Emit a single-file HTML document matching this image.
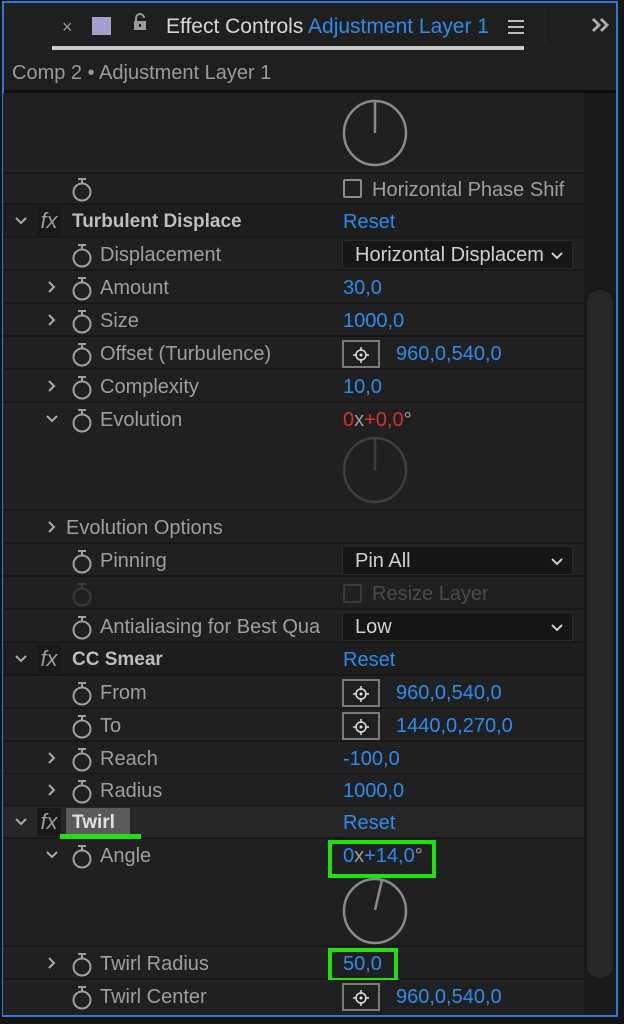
<!DOCTYPE html>
<html><head><meta charset="utf-8"><style>
*{margin:0;padding:0;box-sizing:border-box}
body{width:624px;height:1024px;background:#141414;font-family:"Liberation Sans",sans-serif;position:relative;overflow:hidden}
.frame{position:absolute;left:2px;top:1px;width:616px;height:1016px;border:2px solid #2f78d8;background:#1f1f1f}
.a{position:absolute}
.row{position:absolute;left:3px;width:581px;height:33px;border-bottom:2px solid #171717;background:#202020}
.hdr{background:#1d1d1d}
.lbl{position:absolute;left:97px;top:6px;font-size:20px;color:#9e9e9e;white-space:nowrap}
.hl{left:69px;font-weight:bold;color:#bdbdbd;font-size:19px}
.val{position:absolute;left:340px;top:6px;font-size:20px;color:#2d8ceb;white-space:nowrap}
.chev{position:absolute;left:42px;top:9px}
.hchev{left:11px}
.sw{position:absolute;left:67px;top:5px}
.fx{position:absolute;left:34px;top:2px;width:24px;height:28px;background:#191919;color:#9a9a9a;font-family:"Liberation Sans",sans-serif;font-style:italic;font-size:22px;text-align:center;line-height:28px}
.dd{position:absolute;left:339px;top:2px;width:231px;height:29px;background:#161616;border:1px solid #2a2a2a;color:#d0d0d0;font-size:20px;white-space:nowrap}
.dd span{position:absolute;left:12px;top:3px;width:190px;overflow:hidden}
.dd svg{position:absolute;right:8px;top:10px}
.tgt{position:absolute;left:339px;top:3px;width:38px;height:28px;border:2px solid #7a7a7a}
.tgt svg{position:absolute;left:9px;top:5px}
.val2{left:393px}
</style></head><body>
<div class="frame"></div>
<div class="a" style="left:62px;top:17px;color:#9a9a9a;font-size:18px">×</div>
<div class="a" style="left:92px;top:17px;width:19px;height:18px;background:#a19fcc"></div>
<svg class="a" style="left:132px;top:13px" width="16" height="18"><path d="M4 8V5a4 4 0 0 1 8 0" fill="none" stroke="#9a9a9a" stroke-width="2"/><rect x="2" y="8" width="12" height="9" fill="#9a9a9a"/><rect x="7" y="11" width="2" height="3" fill="#1f1f1f"/></svg>
<div class="a" style="left:166px;top:15px;font-size:21px;color:#d6d6d6;white-space:nowrap">Effect Controls <span style="color:#2d8ceb">Adjustment Layer 1</span></div>
<svg class="a" style="left:508px;top:20px" width="16" height="14"><path d="M0 1h16M0 7h16M0 13h16" stroke="#bbb" stroke-width="2"/></svg>
<div class="a" style="left:52px;top:46px;width:472px;height:4px;background:#c8c8c8"></div>
<div class="a" style="left:545px;top:10px;width:1px;height:35px;background:#2a2a2a"></div>
<svg class="a" style="left:591px;top:17px" width="20" height="16"><path d="M2 2l6 6-6 6M10 2l6 6-6 6" fill="none" stroke="#aaa" stroke-width="3"/></svg>
<div class="a" style="left:12px;top:62px;font-size:20px;color:#9a9a9a;white-space:nowrap">Comp 2 • Adjustment Layer 1</div>
<div class="a" style="left:4px;top:90px;width:612px;height:3px;background:#0e0e0e"></div>
<div class="a" style="left:584px;top:93px;width:32px;height:922px;background:#191919"></div>
<div class="a" style="left:587px;top:290px;width:26px;height:688px;background:#272727;border-radius:12px"></div>
<div class="row" style="top:93px;height:81px"><svg class="a" style="left:339px;top:6px" width="66" height="68"><ellipse cx="33" cy="34" rx="31" ry="32" fill="none" stroke="#8a8a8a" stroke-width="2.5"/><path d="M33 3v31" stroke="#8a8a8a" stroke-width="2.5"/></svg></div>
<div class="row" style="top:174px;height:31px"><svg class="sw" style="top:3px" width="26" height="26"><path d="M8 2h8M12 2v4" stroke="#a0a0a0" stroke-width="2"/><circle cx="12" cy="15" r="8.5" fill="none" stroke="#a0a0a0" stroke-width="2"/></svg><div class="a" style="left:340px;top:5px;width:19px;height:19px;border:2px solid #8a8a8a;border-radius:2px"></div><div class="lbl" style="left:369px;top:5px">Horizontal Phase Shif</div></div>

<div class="row hdr" style="top:205px"><svg class="chev hchev" width="14" height="14"><path d="M2 4l5 5 5-5" fill="none" stroke="#aaa" stroke-width="2"/></svg><div class="fx">fx</div><div class="lbl hl">Turbulent Displace</div><div class="val">Reset</div></div>
<div class="row" style="top:238px"><svg class="sw" width="26" height="26"><path d="M8 2h8M12 2v4" stroke="#a0a0a0" stroke-width="2"/><circle cx="12" cy="15" r="8.5" fill="none" stroke="#a0a0a0" stroke-width="2"/></svg><div class="lbl">Displacement</div><div class="dd"><span>Horizontal Displacement</span><svg width="14" height="10"><path d="M2 2l5 5 5-5" fill="none" stroke="#ccc" stroke-width="2"/></svg></div></div>
<div class="row" style="top:271px"><svg class="chev" width="14" height="14"><path d="M4 2l5 5-5 5" fill="none" stroke="#aaa" stroke-width="2"/></svg><svg class="sw" width="26" height="26"><path d="M8 2h8M12 2v4" stroke="#a0a0a0" stroke-width="2"/><circle cx="12" cy="15" r="8.5" fill="none" stroke="#a0a0a0" stroke-width="2"/></svg><div class="lbl">Amount</div><div class="val">30,0</div></div>
<div class="row" style="top:304px"><svg class="chev" width="14" height="14"><path d="M4 2l5 5-5 5" fill="none" stroke="#aaa" stroke-width="2"/></svg><svg class="sw" width="26" height="26"><path d="M8 2h8M12 2v4" stroke="#a0a0a0" stroke-width="2"/><circle cx="12" cy="15" r="8.5" fill="none" stroke="#a0a0a0" stroke-width="2"/></svg><div class="lbl">Size</div><div class="val">1000,0</div></div>
<div class="row" style="top:337px"><svg class="sw" width="26" height="26"><path d="M8 2h8M12 2v4" stroke="#a0a0a0" stroke-width="2"/><circle cx="12" cy="15" r="8.5" fill="none" stroke="#a0a0a0" stroke-width="2"/></svg><div class="lbl">Offset (Turbulence)</div><div class="tgt"><svg width="16" height="16"><circle cx="8" cy="8" r="5" fill="none" stroke="#ddd" stroke-width="1.5"/><path d="M8 0v4M8 12v4M0 8h4M12 8h4" stroke="#ddd" stroke-width="1.5"/><circle cx="8" cy="8" r="1.5" fill="#ddd"/></svg></div><div class="val val2">960,0,540,0</div></div>
<div class="row" style="top:370px"><svg class="chev" width="14" height="14"><path d="M4 2l5 5-5 5" fill="none" stroke="#aaa" stroke-width="2"/></svg><svg class="sw" width="26" height="26"><path d="M8 2h8M12 2v4" stroke="#a0a0a0" stroke-width="2"/><circle cx="12" cy="15" r="8.5" fill="none" stroke="#a0a0a0" stroke-width="2"/></svg><div class="lbl">Complexity</div><div class="val">10,0</div></div>
<div class="row" style="top:403px;height:108px"><svg class="chev" width="14" height="14"><path d="M2 4l5 5 5-5" fill="none" stroke="#aaa" stroke-width="2"/></svg><svg class="sw" width="26" height="26"><path d="M8 2h8M12 2v4" stroke="#a0a0a0" stroke-width="2"/><circle cx="12" cy="15" r="8.5" fill="none" stroke="#a0a0a0" stroke-width="2"/></svg><div class="lbl">Evolution</div><div class="val" style="color:#d83030">0<span style="color:#9e9e9e">x</span>+0,0<span style="color:#9e9e9e">°</span></div><svg class="a" style="left:339px;top:33px" width="66" height="68"><ellipse cx="33" cy="34" rx="31" ry="32" fill="none" stroke="#3e3e3e" stroke-width="2.5"/><path d="M33 3v31" stroke="#3e3e3e" stroke-width="2.5"/></svg></div>
<div class="row" style="top:511px"><svg class="chev" width="14" height="14"><path d="M4 2l5 5-5 5" fill="none" stroke="#aaa" stroke-width="2"/></svg><div class="lbl" style="left:63px">Evolution Options</div></div>
<div class="row" style="top:544px"><svg class="sw" width="26" height="26"><path d="M8 2h8M12 2v4" stroke="#a0a0a0" stroke-width="2"/><circle cx="12" cy="15" r="8.5" fill="none" stroke="#a0a0a0" stroke-width="2"/></svg><div class="lbl">Pinning</div><div class="dd"><span>Pin All</span><svg width="14" height="10"><path d="M2 2l5 5 5-5" fill="none" stroke="#ccc" stroke-width="2"/></svg></div></div>
<div class="row" style="top:577px"><svg class="sw" width="26" height="26"><path d="M8 2h8M12 2v4" stroke="#3a3a3a" stroke-width="2"/><circle cx="12" cy="15" r="8.5" fill="none" stroke="#3a3a3a" stroke-width="2"/></svg><div class="a" style="left:340px;top:7px;width:19px;height:19px;border:2px solid #3a3a3a;border-radius:2px"></div><div class="lbl" style="left:369px;color:#4a4a4a">Resize Layer</div></div>
<div class="row" style="top:610px"><svg class="sw" width="26" height="26"><path d="M8 2h8M12 2v4" stroke="#a0a0a0" stroke-width="2"/><circle cx="12" cy="15" r="8.5" fill="none" stroke="#a0a0a0" stroke-width="2"/></svg><div class="lbl">Antialiasing for Best Qua</div><div class="dd"><span>Low</span><svg width="14" height="10"><path d="M2 2l5 5 5-5" fill="none" stroke="#ccc" stroke-width="2"/></svg></div></div>
<div class="row hdr" style="top:643px"><svg class="chev hchev" width="14" height="14"><path d="M2 4l5 5 5-5" fill="none" stroke="#aaa" stroke-width="2"/></svg><div class="fx">fx</div><div class="lbl hl">CC Smear</div><div class="val">Reset</div></div>
<div class="row" style="top:676px"><svg class="sw" width="26" height="26"><path d="M8 2h8M12 2v4" stroke="#a0a0a0" stroke-width="2"/><circle cx="12" cy="15" r="8.5" fill="none" stroke="#a0a0a0" stroke-width="2"/></svg><div class="lbl">From</div><div class="tgt"><svg width="16" height="16"><circle cx="8" cy="8" r="5" fill="none" stroke="#ddd" stroke-width="1.5"/><path d="M8 0v4M8 12v4M0 8h4M12 8h4" stroke="#ddd" stroke-width="1.5"/><circle cx="8" cy="8" r="1.5" fill="#ddd"/></svg></div><div class="val val2">960,0,540,0</div></div>
<div class="row" style="top:709px"><svg class="sw" width="26" height="26"><path d="M8 2h8M12 2v4" stroke="#a0a0a0" stroke-width="2"/><circle cx="12" cy="15" r="8.5" fill="none" stroke="#a0a0a0" stroke-width="2"/></svg><div class="lbl">To</div><div class="tgt"><svg width="16" height="16"><circle cx="8" cy="8" r="5" fill="none" stroke="#ddd" stroke-width="1.5"/><path d="M8 0v4M8 12v4M0 8h4M12 8h4" stroke="#ddd" stroke-width="1.5"/><circle cx="8" cy="8" r="1.5" fill="#ddd"/></svg></div><div class="val val2">1440,0,270,0</div></div>
<div class="row" style="top:742px"><svg class="chev" width="14" height="14"><path d="M4 2l5 5-5 5" fill="none" stroke="#aaa" stroke-width="2"/></svg><svg class="sw" width="26" height="26"><path d="M8 2h8M12 2v4" stroke="#a0a0a0" stroke-width="2"/><circle cx="12" cy="15" r="8.5" fill="none" stroke="#a0a0a0" stroke-width="2"/></svg><div class="lbl">Reach</div><div class="val">-100,0</div></div>
<div class="row" style="top:774px"><svg class="chev" width="14" height="14"><path d="M4 2l5 5-5 5" fill="none" stroke="#aaa" stroke-width="2"/></svg><svg class="sw" width="26" height="26"><path d="M8 2h8M12 2v4" stroke="#a0a0a0" stroke-width="2"/><circle cx="12" cy="15" r="8.5" fill="none" stroke="#a0a0a0" stroke-width="2"/></svg><div class="lbl">Radius</div><div class="val">1000,0</div></div>
<div class="row hdr" style="top:806px;background:#262626"><svg class="chev hchev" width="14" height="14"><path d="M2 4l5 5 5-5" fill="none" stroke="#aaa" stroke-width="2"/></svg><div class="fx">fx</div><div class="a" style="left:63px;top:2px;width:64px;height:27px;background:#5a5a5a"></div><div class="lbl hl" style="left:69px;color:#e0e0e0">Twirl</div><div class="val">Reset</div></div>
<div class="a" style="left:60px;top:834px;width:81px;height:6px;background:#22e010"></div>
<div class="row" style="top:839px;height:108px"><svg class="chev" width="14" height="14"><path d="M2 4l5 5 5-5" fill="none" stroke="#aaa" stroke-width="2"/></svg><svg class="sw" width="26" height="26"><path d="M8 2h8M12 2v4" stroke="#a0a0a0" stroke-width="2"/><circle cx="12" cy="15" r="8.5" fill="none" stroke="#a0a0a0" stroke-width="2"/></svg><div class="lbl">Angle</div><div class="val">0<span style="color:#9e9e9e">x</span>+14,0<span style="color:#9e9e9e">°</span></div><svg class="a" style="left:339px;top:38px" width="66" height="68"><ellipse cx="33" cy="34" rx="31" ry="32" fill="none" stroke="#8a8a8a" stroke-width="2.5"/><path d="M33 33l7-30" stroke="#8a8a8a" stroke-width="2.5"/></svg></div>
<div class="a" style="left:328px;top:840px;width:108px;height:38px;border:4px solid #22e010"></div>
<div class="row" style="top:947px"><svg class="chev" width="14" height="14"><path d="M4 2l5 5-5 5" fill="none" stroke="#aaa" stroke-width="2"/></svg><svg class="sw" width="26" height="26"><path d="M8 2h8M12 2v4" stroke="#a0a0a0" stroke-width="2"/><circle cx="12" cy="15" r="8.5" fill="none" stroke="#a0a0a0" stroke-width="2"/></svg><div class="lbl">Twirl Radius</div><div class="val">50,0</div></div>
<div class="a" style="left:328px;top:948px;width:70px;height:34px;border:4px solid #22e010"></div>
<div class="row" style="top:980px;height:35px;border-bottom:none"><svg class="sw" width="26" height="26"><path d="M8 2h8M12 2v4" stroke="#a0a0a0" stroke-width="2"/><circle cx="12" cy="15" r="8.5" fill="none" stroke="#a0a0a0" stroke-width="2"/></svg><div class="lbl">Twirl Center</div><div class="tgt"><svg width="16" height="16"><circle cx="8" cy="8" r="5" fill="none" stroke="#ddd" stroke-width="1.5"/><path d="M8 0v4M8 12v4M0 8h4M12 8h4" stroke="#ddd" stroke-width="1.5"/><circle cx="8" cy="8" r="1.5" fill="#ddd"/></svg></div><div class="val val2">960,0,540,0</div></div>
</body></html>
